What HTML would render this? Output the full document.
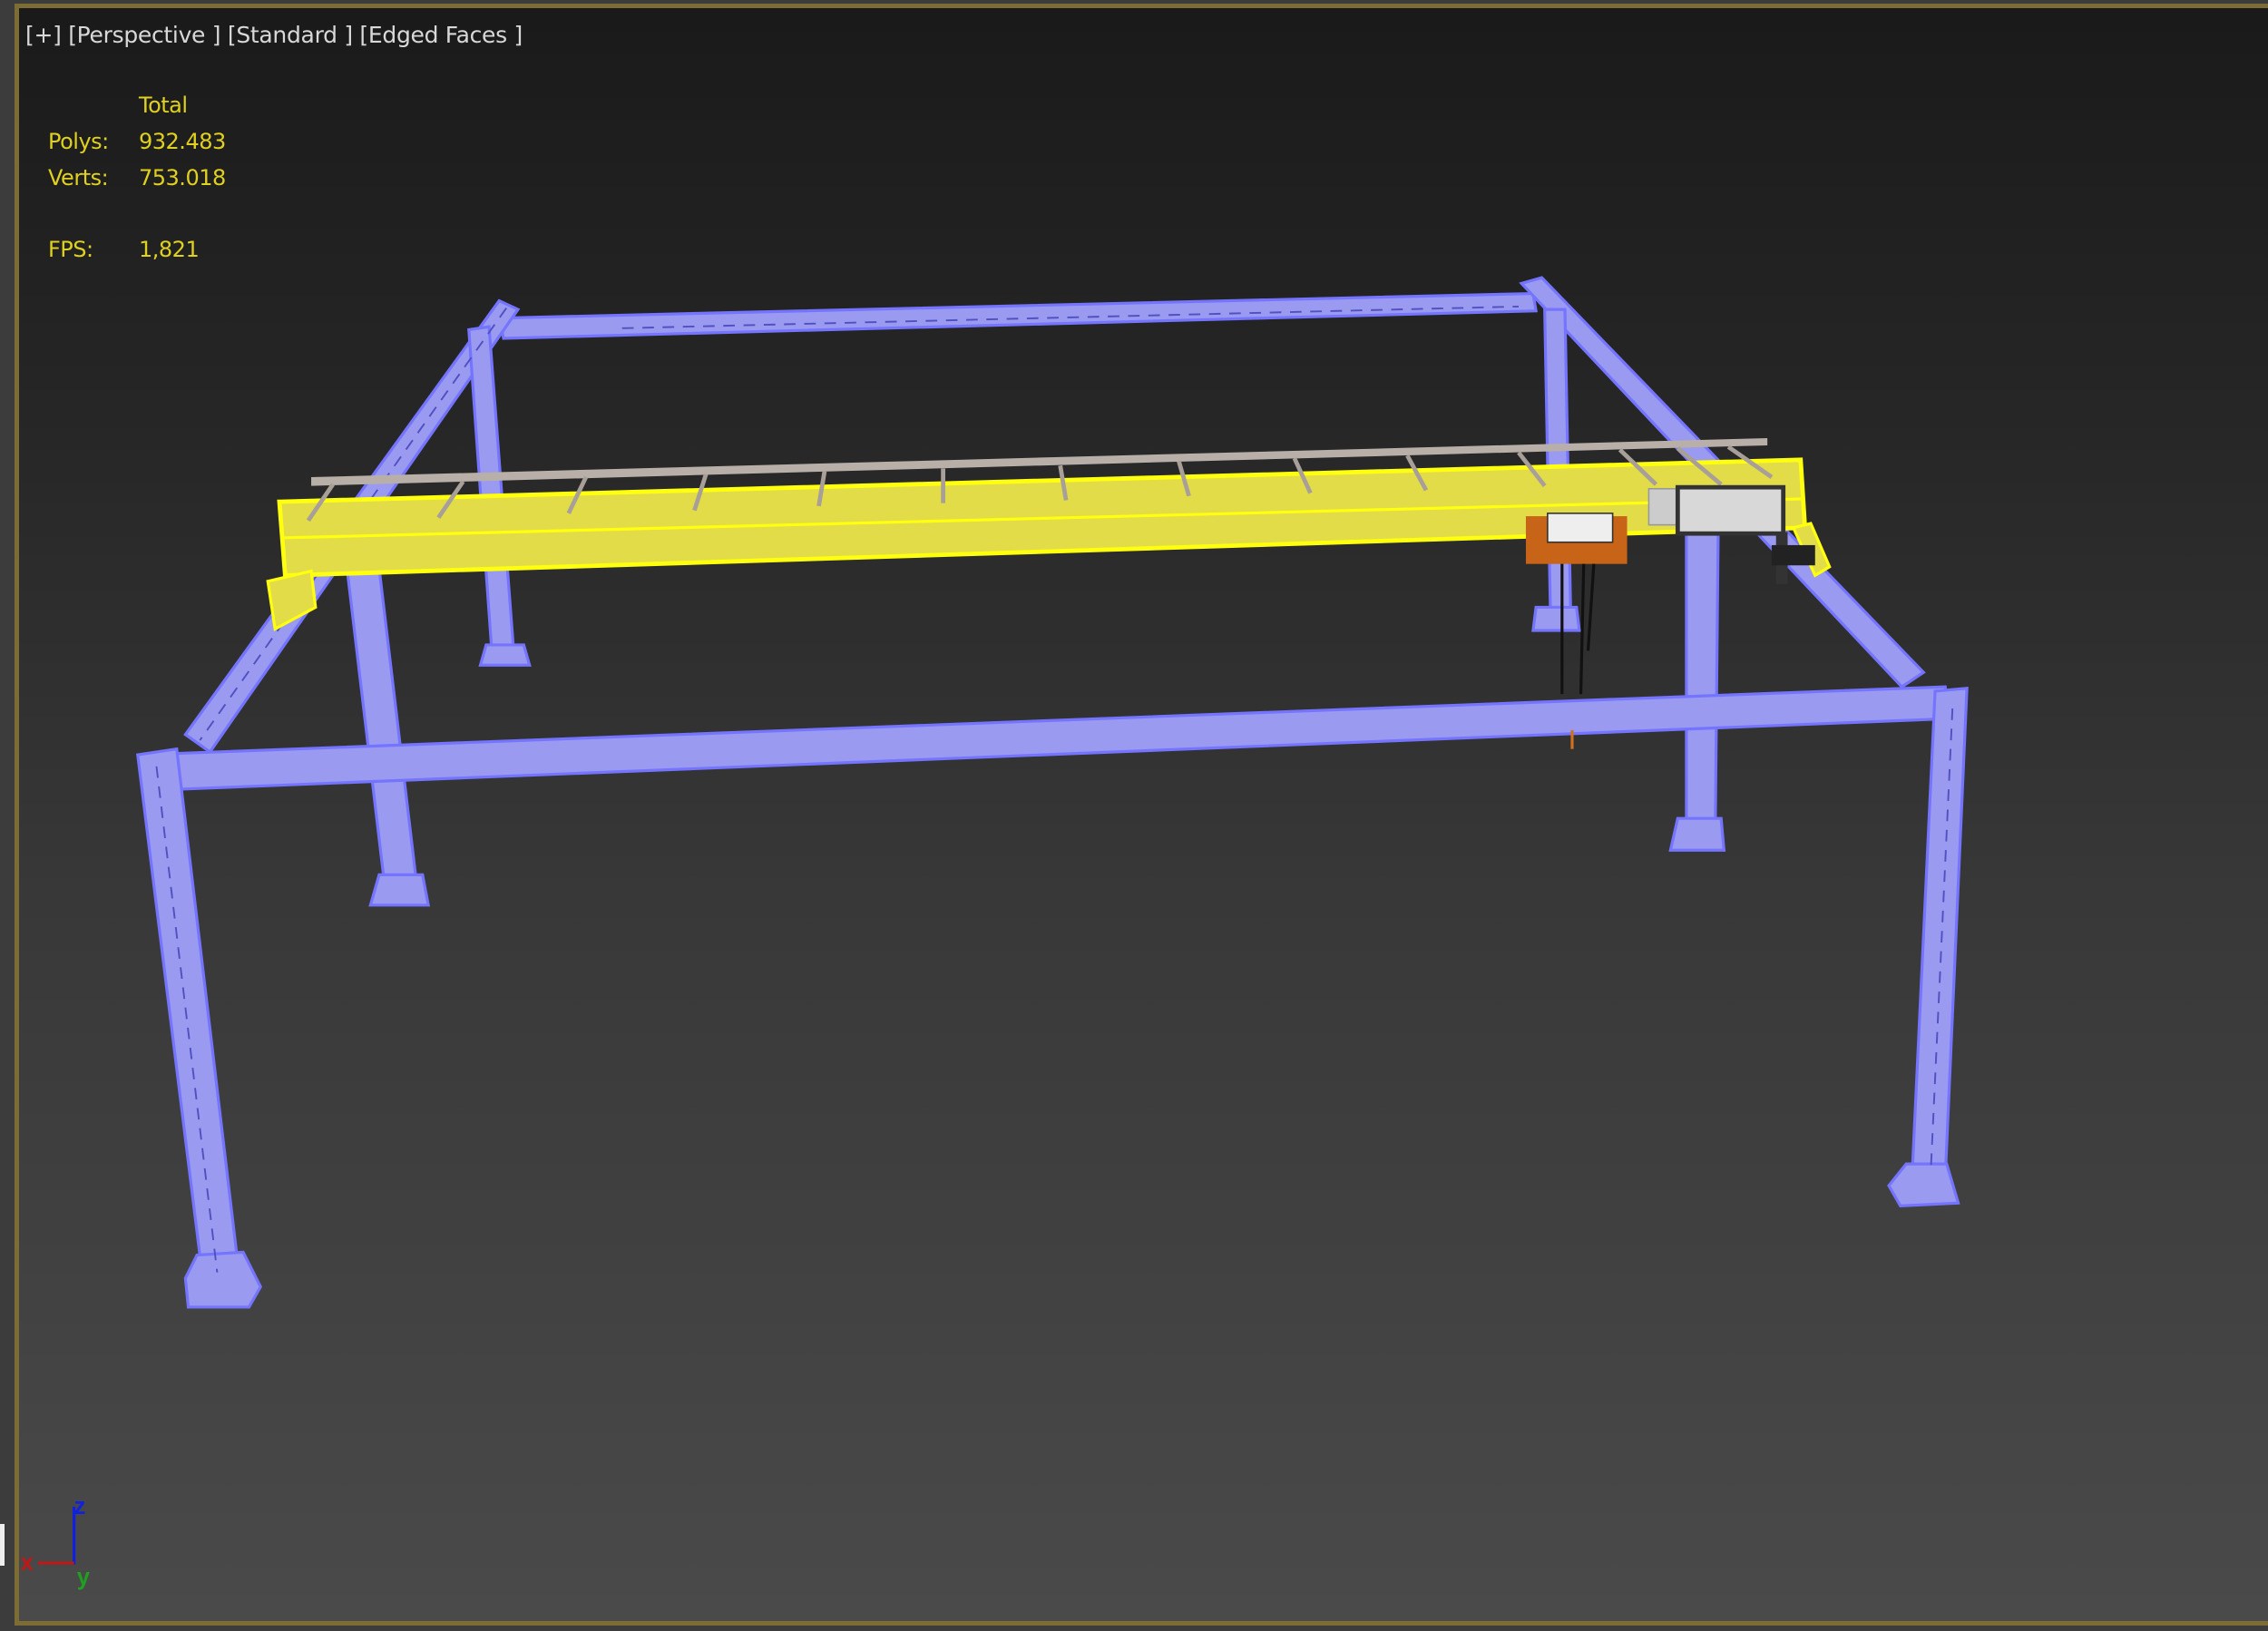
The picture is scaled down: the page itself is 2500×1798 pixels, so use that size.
<!DOCTYPE html>
<html><head><meta charset="utf-8"><style>
html,body{margin:0;padding:0;width:2500px;height:1798px;overflow:hidden;background:#3c3c3c}
#vp{position:absolute;left:16px;top:4px;width:2484px;height:1788px;box-sizing:border-box;border:5px solid #7d6c33;border-right:none;background:linear-gradient(#1a1a1a 0%,#262626 25%,#383838 55%,#4a4a4a 100%)}
.t{position:absolute;font-family:"DejaVu Sans","Liberation Sans",sans-serif;font-size:25px;white-space:pre}
.y{color:#e0d020;font-size:24px;letter-spacing:-0.5px}
svg{position:absolute;left:0;top:0}
</style></head><body>
<div style="position:absolute;left:0;top:1680px;width:5px;height:46px;background:#eee"></div>
<div id="vp"></div>
<svg width="2500" height="1798" viewBox="0 0 1568 1128">
<g fill="#9a9af0" stroke="#7474ff" stroke-width="2">
<polygon points="345,220 1060,203 1062,215 348,234"/>
<polygon points="345,208 358,214 145,520 128,508"/>
<polygon points="1052,196 1066,192 1330,465 1315,475"/>
<polygon points="324,228 338,226 355,450 340,452"/>
<polygon points="336,446 362,446 366,460 332,460"/>
<polygon points="240,395 262,393 288,612 266,614"/>
<polygon points="262,605 292,605 296,626 256,626"/>
<polygon points="1068,214 1082,214 1086,425 1072,425"/>
<polygon points="1062,420 1090,420 1092,436 1060,436"/>
<polygon points="1166,368 1188,368 1186,572 1166,572"/>
<polygon points="1160,566 1190,566 1192,588 1155,588"/>
<polygon points="98,522 1345,475 1348,497 120,546"/>
<polygon points="95,522 122,518 165,880 140,884"/>
<polygon points="136,868 168,866 180,890 172,904 130,904 128,884"/>
<polygon points="1338,478 1360,476 1345,815 1322,815"/>
<polygon points="1318,805 1346,805 1354,832 1314,834 1306,820"/>
</g>
<g stroke="#5050c0" stroke-width="1.2" fill="none" stroke-dasharray="8,6">
<line x1="108" y1="530" x2="150" y2="880"/><line x1="1350" y1="490" x2="1335" y2="810"/>
<line x1="430" y1="227" x2="1050" y2="212"/>
<line x1="350" y1="213" x2="138" y2="512"/>
</g>
<polygon points="193,347 1245,318 1248,365 197,398" fill="#e2dc48" stroke="#ffff10" stroke-width="3"/>
<polyline points="195,372 1246,345" stroke="#ffff10" stroke-width="2" fill="none"/>
<polygon points="185,402 215,395 218,420 190,435" fill="#e2dc48" stroke="#ffff10" stroke-width="2"/>
<polygon points="1240,365 1252,362 1265,392 1255,398" fill="#e2dc48" stroke="#ffff10" stroke-width="2"/>
<polygon points="215,330 1222,303 1222,308 215,336" fill="#b8b0a8"/>
<g stroke="#a8a098" stroke-width="3">
<line x1="230" y1="335" x2="213" y2="360"/><line x1="320" y1="333" x2="303" y2="358"/>
<line x1="405" y1="330" x2="393" y2="355"/><line x1="488" y1="328" x2="480" y2="353"/>
<line x1="570" y1="326" x2="566" y2="350"/><line x1="652" y1="324" x2="652" y2="348"/>
<line x1="733" y1="322" x2="737" y2="346"/><line x1="815" y1="319" x2="822" y2="343"/>
<line x1="895" y1="317" x2="906" y2="341"/><line x1="973" y1="315" x2="986" y2="339"/>
<line x1="1050" y1="313" x2="1068" y2="336"/><line x1="1120" y1="311" x2="1145" y2="335"/>
<line x1="1160" y1="310" x2="1190" y2="335"/><line x1="1195" y1="309" x2="1225" y2="330"/>
</g>
<rect x="1140" y="338" width="22" height="25" fill="#ccc" stroke="#999"/>
<rect x="1160" y="337" width="73" height="32" fill="#d8d8d8" stroke="#333" stroke-width="3"/>
<rect x="1228" y="368" width="8" height="36" fill="#333"/>
<rect x="1225" y="377" width="30" height="14" fill="#222"/>
<rect x="1055" y="357" width="70" height="33" fill="#c86418"/>
<rect x="1070" y="355" width="45" height="20" fill="#eee" stroke="#333"/>
<g stroke="#111" stroke-width="2"><line x1="1080" y1="390" x2="1080" y2="480"/><line x1="1095" y1="390" x2="1093" y2="480"/><line x1="1102" y1="390" x2="1098" y2="450"/></g>
<line x1="1087" y1="505" x2="1087" y2="518" stroke="#d07020" stroke-width="2"/>
<line x1="51" y1="1042" x2="51" y2="1082" stroke="#1020e0" stroke-width="2"/>
<line x1="26" y1="1081" x2="51" y2="1081" stroke="#c01818" stroke-width="2"/>
<text x="51" y="1047" fill="#1020e0" font-family="Liberation Sans" font-size="16" font-weight="bold">z</text>
<text x="14" y="1086" fill="#c01818" font-family="Liberation Sans" font-size="16" font-weight="bold">x</text>
<text x="53" y="1096" fill="#20a020" font-family="Liberation Sans" font-size="16" font-weight="bold">y</text>
</svg>
<div class="t" style="left:28px;top:24px;color:#d8d8d8;letter-spacing:-0.3px">[+] [Perspective ] [Standard ] [Edged Faces ]</div>
<div class="t y" style="left:153px;top:102px">Total</div>
<div class="t y" style="left:53px;top:142px">Polys:</div>
<div class="t y" style="left:153px;top:142px">932.483</div>
<div class="t y" style="left:53px;top:182px">Verts:</div>
<div class="t y" style="left:153px;top:182px">753.018</div>
<div class="t y" style="left:53px;top:261px">FPS:</div>
<div class="t y" style="left:153px;top:261px">1,821</div>
</body></html>
